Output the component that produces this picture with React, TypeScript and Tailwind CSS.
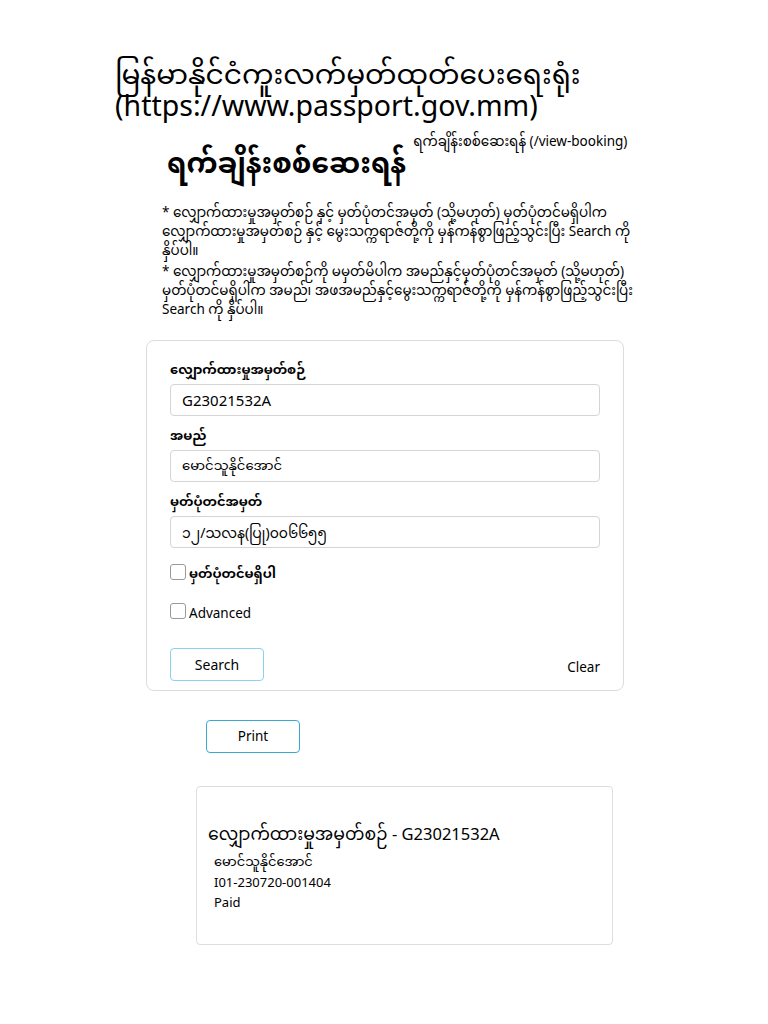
import React from "react";

const font = { fontFamily: '"Noto Sans", "Noto Sans Myanmar", Padauk, sans-serif' };

export default function App() {
  return (
    <div className="min-h-[1024px] bg-white text-black" style={font}>
      <div className="pt-[57px] pl-[115px] pr-[120px]">
        <h1 className="text-[28px] leading-[32px] font-normal">
          မြန်မာနိုင်ငံကူးလက်မှတ်ထုတ်ပေးရေးရုံး
          <br />
          <span className="text-[28.5px]">(https://www.passport.gov.mm)</span>
        </h1>
      </div>
      <div className="flex items-start pl-[167px] mt-[17px]">
        <h2 className="text-[28px] leading-[48px] font-bold">ရက်ချိန်းစစ်ဆေးရန်</h2>
        <span className="text-[13.5px] leading-[17px] ml-[7px] mt-[-5px]">ရက်ချိန်းစစ်ဆေးရန် (/view-booking)</span>
      </div>
      <div className="pl-[162px] pr-[126px] mt-[17px] text-[13.5px] leading-[19px]">
        <p>
          * လျှောက်ထားမှုအမှတ်စဉ် နှင့် မှတ်ပုံတင်အမှတ် (သို့မဟုတ်) မှတ်ပုံတင်မရှိပါက လျှောက်ထားမှုအမှတ်စဉ် နှင့် မွေးသက္ကရာဇ်တို့ကို မှန်ကန်စွာဖြည့်သွင်းပြီး Search ကို နှိပ်ပါ။
        </p>
        <p className="mt-[2px]">
          * လျှောက်ထားမှုအမှတ်စဉ်ကို မမှတ်မိပါက အမည်နှင့်မှတ်ပုံတင်အမှတ် (သို့မဟုတ်) မှတ်ပုံတင်မရှိပါက အမည်၊ အဖအမည်နှင့်မွေးသက္ကရာဇ်တို့ကို မှန်ကန်စွာဖြည့်သွင်းပြီး Search ကို နှိပ်ပါ။
        </p>
      </div>
      <div className="ml-[146px] w-[478px] mt-[21px] border border-[#dcdcdc] rounded-[8px] px-[23px] pt-[16px] pb-[9px]">
        <label className="block text-[13px] font-bold leading-[25px]">လျှောက်ထားမှုအမှတ်စဉ်</label>
        <div className="h-[32px] border border-[#d4d4d4] rounded-[4px] flex items-center px-[11px] text-[15px] mt-[2px]">G23021532A</div>
        <label className="block text-[13px] font-bold leading-[25px] mt-[7px]">အမည်</label>
        <div className="h-[32px] border border-[#d4d4d4] rounded-[4px] flex items-center px-[11px] text-[13.2px] mt-[2px]">မောင်သူနိုင်အောင်</div>
        <label className="block text-[13px] font-bold leading-[25px] mt-[7px]">မှတ်ပုံတင်အမှတ်</label>
        <div className="h-[32px] border border-[#d4d4d4] rounded-[4px] flex items-center px-[11px] text-[14px] mt-[2px]">၁၂/သလန(ပြု)၀၀၆၆၅၅</div>
        <div className="flex items-center mt-[16px] h-[20px]">
          <span className="w-[16px] h-[16px] border border-[#9a9a9a] rounded-[3px] mr-[3px] mt-[-4px]"></span>
          <span className="text-[13px] font-bold">မှတ်ပုံတင်မရှိပါ</span>
        </div>
        <div className="flex items-center mt-[19px] h-[20px]">
          <span className="w-[16px] h-[16px] border border-[#9a9a9a] rounded-[3px] mr-[3px] mt-[-4px]"></span>
          <span className="text-[13.5px]">Advanced</span>
        </div>
        <div className="flex items-end justify-between mt-[25px]">
          <button className="w-[94px] h-[33px] border border-[#8ad3ee] rounded-[4px] text-[14px] bg-white">Search</button>
          <span className="text-[13.5px] mb-[4px]">Clear</span>
        </div>
      </div>
      <div className="ml-[206px] mt-[29px]">
        <button className="w-[94px] h-[33px] border border-[#3aa9d2] rounded-[4px] text-[13.5px] bg-white">Print</button>
      </div>
      <div className="ml-[196px] w-[417px] mt-[33px] h-[159px] border border-[#dedede] rounded-[4px] px-[11px] pt-[32px]">
        <div className="text-[17.3px] leading-[30px]">
          လျှောက်ထားမှုအမှတ်စဉ် <span className="text-[16.5px]">- G23021532A</span>
        </div>
        <div className="pl-[6px] text-[13px] leading-[20.5px] mt-[2px]">
          <div>မောင်သူနိုင်အောင်</div>
          <div>I01-230720-001404</div>
          <div>Paid</div>
        </div>
      </div>
    </div>
  );
}
